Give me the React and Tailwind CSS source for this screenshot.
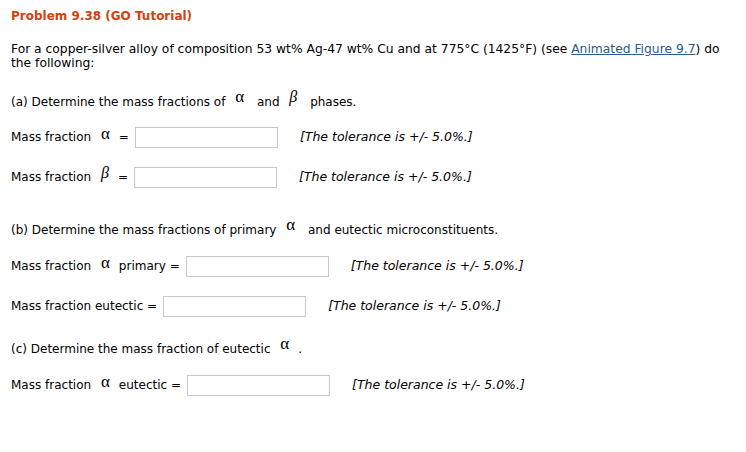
const Alpha = () => (
  <span className="ml-[6px] mr-[9px] inline-block -translate-y-[4px] font-['Liberation_Serif',serif] text-[17px] leading-none">α</span>
);

const Beta = () => (
  <span className="ml-[6px] mr-[9px] inline-block -translate-y-[4px] font-['Liberation_Serif',serif] text-[16px] italic leading-none">β</span>
);

const Field = ({ children }) => (
  <div className="flex h-[20px] items-center text-[12px]">
    <span className="flex items-center whitespace-pre">{children}</span>
    <input className="ml-[6px] h-[21px] w-[143px] border border-[#c8c8c8] bg-white" />
    <span className="ml-[22px] text-[12.5px] italic">[The tolerance is +/- 5.0%.]</span>
  </div>
);

export default function App() {
  return (
    <div className="h-[452px] w-[746px] bg-white px-[11px] pt-[9px] font-['DejaVu_Sans',Verdana,sans-serif] text-black">
      <h1 className="text-[12px] font-bold leading-[15px] text-[#d2420c]">Problem 9.38 (GO Tutorial)</h1>

      <p className="mt-[18px] text-[12.3px] leading-[14px]">
        For a copper-silver alloy of composition 53 wt% Ag-47 wt% Cu and at 775°C (1425°F) (see{" "}
        <a href="#" className="text-[#2b5a8e] underline">Animated Figure 9.7</a>) do the following:
      </p>

      <p className="mt-[22px] text-[12px] leading-[15px]">
        (a) Determine the mass fractions of <Alpha /> and <Beta /> phases.
      </p>

      <div className="mt-[17px] flex flex-col gap-[20px]">
        <Field>Mass fraction <Alpha />=</Field>
        <Field>Mass fraction <Beta />=</Field>
      </div>

      <p className="mt-[33px] text-[12px] leading-[15px]">
        (b) Determine the mass fractions of primary <Alpha /> and eutectic microconstituents.
      </p>

      <div className="mt-[18px] flex flex-col gap-[20px]">
        <Field>Mass fraction <Alpha />primary =</Field>
        <Field>Mass fraction eutectic =</Field>
      </div>

      <p className="mt-[23px] text-[12px] leading-[15px]">
        (c) Determine the mass fraction of eutectic <Alpha />.
      </p>

      <div className="mt-[18px] flex flex-col gap-[20px]">
        <Field>Mass fraction <Alpha />eutectic =</Field>
      </div>
    </div>
  );
}
